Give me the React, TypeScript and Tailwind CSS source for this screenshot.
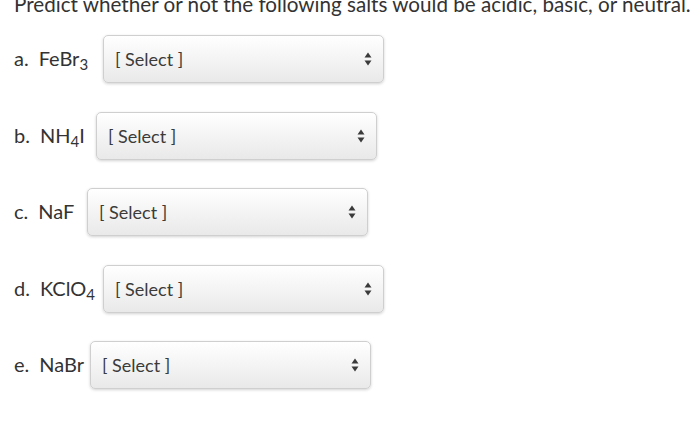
import React from "react";

function Arrows() {
  return (
    <svg width="8" height="14" viewBox="0 0 8 14" className="shrink-0">
      <path d="M4 0.5 L7.5 5.5 L0.5 5.5 Z" fill="#3a3a3a" />
      <path d="M4 13.5 L7.5 8.5 L0.5 8.5 Z" fill="#3a3a3a" />
    </svg>
  );
}

function Sel() {
  return (
    <div className="w-[281px] h-[48px] rounded-[5px] border border-[#cfcfcf] bg-gradient-to-b from-[#ffffff] to-[#e9e9e9] shadow-[0_1px_3px_rgba(0,0,0,0.18)] flex items-center pl-[11px] pr-[11px] justify-between">
      <span className="text-[18px] text-[#3b3b3b] leading-none">[ Select ]</span>
      <Arrows />
    </div>
  );
}

const sub = "text-[15px] relative top-[4px] align-baseline";

const rows: { l: string; f: React.ReactNode; w: string }[] = [
  { l: "a.", f: <>FeBr<sub className={sub}>3</sub></>, w: "w-[89px]" },
  { l: "b.", f: <>NH<sub className={sub}>4</sub>I</>, w: "w-[82px]" },
  { l: "c.", f: <>NaF</>, w: "w-[73px]" },
  { l: "d.", f: <>KClO<sub className={sub}>4</sub></>, w: "w-[89px]" },
  { l: "e.", f: <>NaBr</>, w: "w-[76px]" },
];

export default function App() {
  return (
    <div className="w-[700px] h-[432px] bg-white overflow-hidden text-[#333333]" style={{ fontFamily: "Lato, 'Noto Sans', sans-serif" }}>
      <div className="pl-[14px] mt-[-8px] text-[20.65px] leading-[24px] whitespace-nowrap">
        Predict whether or not the following salts would be acidic, basic, or neutral.
      </div>
      <div className="flex flex-col gap-[28.5px] mt-[19px] pl-[14px]">
        {rows.map((r, i) => (
          <div key={i} className="flex items-center h-[48px]">
            <div className={"text-[20px] leading-none flex items-baseline shrink-0 mt-[-2px] " + r.w}>
              <span>{r.l}</span>
              <span className="ml-[10px]">{r.f}</span>
            </div>
            <Sel />
          </div>
        ))}
      </div>
    </div>
  );
}
